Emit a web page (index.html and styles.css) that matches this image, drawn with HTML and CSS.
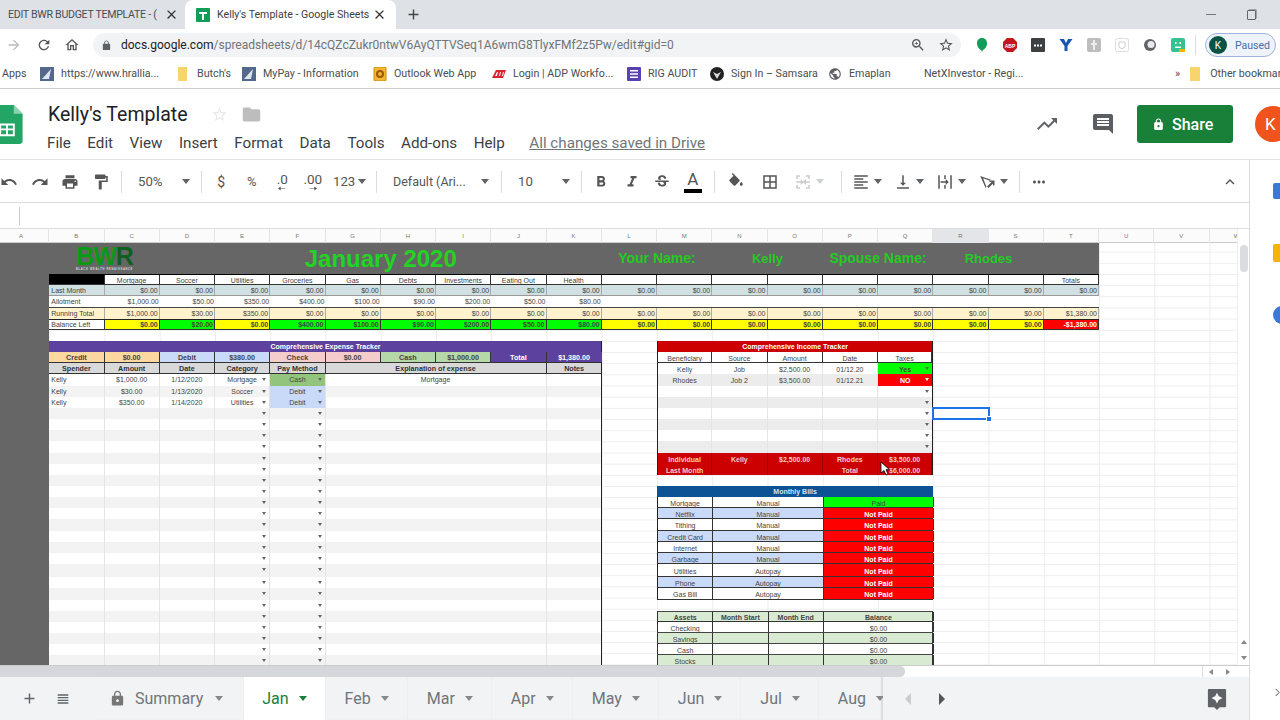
FILE: index.html
```html
<!DOCTYPE html>
<html lang="en">
<head>
<meta charset="UTF-8">
<title>Kelly's Template - Google Sheets</title>
<link rel="stylesheet" href="styles.css">
</head>
<body>

<!-- Browser tabs -->
<div class="tabstrip">
  <div class="btab">
    <span class="btab-text caps">EDIT BWR BUDGET TEMPLATE - (</span>
    <svg class="btab-x" viewBox="0 0 24 24"><path d="M19 6.41L17.59 5 12 10.59 6.41 5 5 6.41 10.59 12 5 17.59 6.41 19 12 13.41 17.59 19 19 17.59 13.41 12z"/></svg>
  </div>
  <div class="btab active">
    <svg class="favicon" viewBox="0 0 14 14"><rect width="14" height="14" rx="1" fill="#0f9d58"/><path d="M3 4h8v2H8v6H6V6H3z" fill="#fff"/></svg>
    <span class="btab-text">Kelly's Template - Google Sheets</span>
    <svg class="btab-x" viewBox="0 0 24 24"><path d="M19 6.41L17.59 5 12 10.59 6.41 5 5 6.41 10.59 12 5 17.59 6.41 19 12 13.41 17.59 19 19 17.59 13.41 12z"/></svg>
  </div>
  <svg class="newtab" viewBox="0 0 24 24"><path d="M19 13h-6v6h-2v-6H5v-2h6V5h2v6h6v2z"/></svg>
  <div class="winctl">
    <span class="win-min"></span>
    <span class="win-restore"></span>
  </div>
</div>

<!-- Address bar -->
<div class="navbar">
  <svg class="nav-ic dim" viewBox="0 0 24 24"><path d="M12 4l-1.41 1.41L16.17 11H4v2h12.17l-5.58 5.59L12 20l8-8z"/></svg>
  <svg class="nav-ic" viewBox="0 0 24 24"><path d="M17.65 6.35C16.2 4.9 14.21 4 12 4c-4.42 0-7.99 3.58-7.99 8s3.57 8 7.99 8c3.73 0 6.84-2.55 7.73-6h-2.08c-.82 2.33-3.04 4-5.65 4-3.31 0-6-2.69-6-6s2.69-6 6-6c1.66 0 3.14.69 4.22 1.78L13 11h7V4l-2.35 2.35z"/></svg>
  <svg class="nav-ic" viewBox="0 0 24 24"><path d="M12 5.69l5 4.5V18h-2v-6H9v6H7v-7.81l5-4.5M12 3L2 12h3v8h6v-6h2v6h6v-8h3L12 3z"/></svg>
  <div class="omnibox">
    <svg class="url-lock" viewBox="0 0 24 24"><path d="M18 8h-1V6c0-2.76-2.24-5-5-5S7 3.24 7 6v2H6c-1.1 0-2 .9-2 2v10c0 1.1.9 2 2 2h12c1.1 0 2-.9 2-2V10c0-1.1-.9-2-2-2zM8.9 6c0-1.71 1.39-3.1 3.1-3.1s3.1 1.39 3.1 3.1v2H8.9V6z"/></svg>
    <span class="url"><b>docs.google.com</b>/spreadsheets/d/14cQZcZukr0ntwV6AyQTTVSeq1A6wmG8TlyxFMf2z5Pw/edit#gid=0</span>
    <svg class="omni-ic" viewBox="0 0 24 24"><path d="M15.5 14h-.79l-.28-.27A6.47 6.47 0 0 0 16 9.5 6.5 6.5 0 1 0 9.5 16c1.61 0 3.09-.59 4.23-1.57l.27.28v.79l5 4.99L20.49 19l-4.99-5zm-6 0C7.01 14 5 11.99 5 9.5S7.01 5 9.5 5 14 7.01 14 9.5 11.99 14 9.5 14zM10 7H9v2H7v1h2v2h1v-2h2V9h-2z"/></svg>
    <svg class="omni-ic" viewBox="0 0 24 24"><path d="M22 9.24l-7.19-.62L12 2 9.19 8.63 2 9.24l5.46 4.73L5.82 21 12 17.27 18.18 21l-1.63-7.03L22 9.24zM12 15.4l-3.76 2.27 1-4.28-3.32-2.88 4.38-.38L12 6.1l1.71 4.04 4.38.38-3.32 2.88 1 4.28L12 15.4z"/></svg>
  </div>
  <div class="exts">
    <svg class="ext" viewBox="0 0 16 16"><path d="M8 1c3.3 0 5 2.4 5 5.4 0 3-2.4 6-4.2 6.6L8 15l-.8-2C5.4 12.4 3 9.4 3 6.4 3 3.4 4.7 1 8 1z" fill="#0f9d58"/></svg>
    <svg class="ext" viewBox="0 0 16 16"><path d="M5 1h6l4 4v6l-4 4H5l-4-4V5z" fill="#c5161d"/><text x="8" y="10.5" class="abp">ABP</text></svg>
    <svg class="ext" viewBox="0 0 16 16"><rect x="1" y="1" width="14" height="14" rx="1" fill="#3c4043"/><path d="M4 7.5h2v2H4zM7 7.5h2v2H7zM10 7.5h2v2h-2z" fill="#fff"/></svg>
    <svg class="ext" viewBox="0 0 16 16"><path d="M1.5 2H6l2 4 2-4h4.5l-5 7v5h-3V9z" fill="#1a56b0"/></svg>
    <svg class="ext" viewBox="0 0 16 16"><rect x="1" y="1" width="14" height="14" rx="2" fill="#bdbdbd"/><path d="M7 3h2v3h2v2H9v5H7V8H5V6h2z" fill="#eee"/></svg>
    <svg class="ext" viewBox="0 0 16 16"><rect x="1.5" y="1.5" width="13" height="13" rx="2" fill="#fff" stroke="#ddd"/><path d="M5 5h6v5l-3 2-3-2z" fill="none" stroke="#ccc"/></svg>
    <svg class="ext" viewBox="0 0 16 16"><circle cx="8" cy="8" r="6" fill="#5f6368"/><circle cx="9" cy="7.5" r="3.5" fill="#e8eaed"/></svg>
    <svg class="ext" viewBox="0 0 16 16"><rect x="1" y="1" width="14" height="14" rx="2" fill="#34c38f"/><path d="M5 5h1.5v2H5zM9.5 5H11v2H9.5zM5 9.5h6V11H5z" fill="#fff"/><rect x="9" y="12" width="6" height="3" fill="#f4b400"/></svg>
  </div>
  <div class="profile">
    <span class="profile-k">K</span>
    <span class="profile-text">Paused</span>
  </div>
</div>

<!-- Bookmarks -->
<div class="bookmarks">
  <span class="bm first">Apps</span>
  <span class="bm w1"><svg class="bm-ic" viewBox="0 0 14 14"><rect width="14" height="14" fill="#54688c"/><path d="M2 12L11 2l-2 10z" fill="#dfe6f0"/></svg>https://www.hrallia...</span>
  <span class="bm w2"><svg class="bm-ic" viewBox="0 0 14 14"><path d="M2 0h9v14H2z" fill="#f7d46d"/></svg>Butch's</span>
  <span class="bm w3"><svg class="bm-ic" viewBox="0 0 14 14"><rect width="14" height="14" fill="#54688c"/><path d="M2 12L11 2l-2 10z" fill="#dfe6f0"/></svg>MyPay - Information</span>
  <span class="bm w4"><svg class="bm-ic" viewBox="0 0 14 14"><rect x="1" width="12" height="14" rx="1" fill="#f2b632" stroke="#d18c00"/><circle cx="7" cy="7" r="3" fill="none" stroke="#9c5700" stroke-width="2"/></svg>Outlook Web App</span>
  <span class="bm w5"><svg class="bm-ic" viewBox="0 0 14 14"><path d="M0 11L4 3h10l-3 8z" fill="#d9232e"/><path d="M3 9l2-4h1l-1 4zM7 9l1-4h1l-1 4zM10 9l1-4h1l-1 4z" fill="#fff"/></svg>Login | ADP Workfo...</span>
  <span class="bm w6"><svg class="bm-ic" viewBox="0 0 14 14"><rect width="14" height="14" rx="1" fill="#5b3fb5"/><path d="M3 3h8v1.5H3zM3 6.2h8v1.5H3zM3 9.5h8V11H3z" fill="#fff"/></svg>RIG AUDIT</span>
  <span class="bm w7"><svg class="bm-ic" viewBox="0 0 14 14"><circle cx="7" cy="7" r="7" fill="#222"/><path d="M3 5l4 7 4-7-4 2z" fill="#ddd"/></svg>Sign In – Samsara</span>
  <span class="bm w8"><svg class="bm-ic" viewBox="0 0 24 24"><path fill="#5f6368" d="M12 2C6.48 2 2 6.48 2 12s4.48 10 10 10 10-4.48 10-10S17.52 2 12 2zm-1 17.93c-3.95-.49-7-3.85-7-7.93 0-.62.08-1.21.21-1.79L9 15v1c0 1.1.9 2 2 2v1.93zm6.9-2.54c-.26-.81-1-1.39-1.9-1.39h-1v-3c0-.55-.45-1-1-1H8v-2h2c.55 0 1-.45 1-1V7h2c1.1 0 2-.9 2-2v-.41c2.93 1.19 5 4.06 5 7.41 0 2.08-.8 3.97-2.1 5.39z"/></svg>Emaplan</span>
  <span class="bm w9">NetXInvestor - Regi...</span>
  <span class="bm-more">»</span>
  <span class="bm-sep"></span>
  <span class="bm"><svg class="bm-ic" viewBox="0 0 14 14"><path d="M1 0h10v14H1z" fill="#f7d46d"/></svg>Other bookmarks</span>
</div>

<!-- Sheets title bar -->
<div class="docbar">
  <svg class="sheets-logo" viewBox="0 0 32 40"><path d="M3 0h20l9 9v28c0 1.7-1.3 3-3 3H3c-1.7 0-3-1.3-3-3V3c0-1.7 1.3-3 3-3z" fill="#23a566"/><path d="M23 0l9 9h-9z" fill="#8ed1b1"/><path d="M8 19h16v13H8zm2 2v3h5v-3zm7 0v3h5v-3zm-7 5v4h5v-4zm7 0v4h5v-4z" fill="#fff" fill-rule="evenodd"/></svg>
  <div class="docinfo">
    <div class="title-row">
      <span class="doc-title">Kelly's Template</span>
      <svg class="star" viewBox="0 0 24 24"><path d="M22 9.24l-7.19-.62L12 2 9.19 8.63 2 9.24l5.46 4.73L5.82 21 12 17.27 18.18 21l-1.63-7.03L22 9.24zM12 15.4l-3.76 2.27 1-4.28-3.32-2.88 4.38-.38L12 6.1l1.71 4.04 4.38.38-3.32 2.88 1 4.28L12 15.4z"/></svg>
      <svg class="folder" viewBox="0 0 24 24"><path d="M10 4H4c-1.1 0-1.99.9-1.99 2L2 18c0 1.1.9 2 2 2h16c1.1 0 2-.9 2-2V8c0-1.1-.9-2-2-2h-8l-2-2z"/></svg>
    </div>
    <div class="menu">
      <span>File</span><span>Edit</span><span>View</span><span>Insert</span><span>Format</span><span>Data</span><span>Tools</span><span>Add-ons</span><span>Help</span>
      <a class="saved">All changes saved in Drive</a>
    </div>
  </div>
  <svg class="doc-ic trend" viewBox="0 0 24 24"><path d="M16 6l2.29 2.29-4.88 4.88-4-4L2 16.59 3.41 18l6-6 4 4 6.3-6.29L22 12V6z"/></svg>
  <svg class="doc-ic comment" viewBox="0 0 24 24"><path d="M21.99 4c0-1.1-.89-2-1.99-2H4c-1.1 0-2 .9-2 2v12c0 1.1.9 2 2 2h14l4 4-.01-18zM18 14H6v-2h12v2zm0-3H6V9h12v2zm0-3H6V6h12v2z"/></svg>
  <div class="share">
    <svg class="share-lock" viewBox="0 0 24 24"><path d="M18 8h-1V6c0-2.76-2.24-5-5-5S7 3.24 7 6v2H6c-1.1 0-2 .9-2 2v10c0 1.1.9 2 2 2h12c1.1 0 2-.9 2-2V10c0-1.1-.9-2-2-2zm-6 9c-1.1 0-2-.9-2-2s.9-2 2-2 2 .9 2 2-.9 2-2 2zm3.1-9H8.9V6c0-1.71 1.39-3.1 3.1-3.1 1.71 0 3.1 1.39 3.1 3.1v2z"/></svg>
    Share
  </div>
  <span class="avatar">K</span>
</div>

<div class="workspace">
  <div class="main">

    <!-- Formatting toolbar -->
    <div class="toolbar">
      <span class="btn"><svg viewBox="0 0 24 24"><path d="M12.5 8c-2.65 0-5.05.99-6.9 2.6L2 7v9h9l-3.62-3.62c1.39-1.16 3.16-1.88 5.12-1.88 3.54 0 6.55 2.31 7.6 5.5l2.37-.78C21.08 11.03 17.15 8 12.5 8z"/></svg></span>
      <span class="btn"><svg viewBox="0 0 24 24"><path d="M18.4 10.6C16.55 8.99 14.15 8 11.5 8c-4.65 0-8.58 3.03-9.96 7.22L3.9 16c1.05-3.19 4.05-5.5 7.6-5.5 1.95 0 3.73.72 5.12 1.88L13 16h9V7l-3.6 3.6z"/></svg></span>
      <span class="btn"><svg viewBox="0 0 24 24"><path d="M19 8H5c-1.66 0-3 1.34-3 3v6h4v4h12v-4h4v-6c0-1.66-1.34-3-3-3zm-3 11H8v-5h8v5zm3-7c-.55 0-1-.45-1-1s.45-1 1-1 1 .45 1 1-.45 1-1 1zm-1-9H6v4h12V3z"/></svg></span>
      <span class="btn"><svg viewBox="0 0 24 24"><path d="M18 4V3c0-.55-.45-1-1-1H5c-.55 0-1 .45-1 1v4c0 .55.45 1 1 1h12c.55 0 1-.45 1-1V6h1v4H9v11c0 .55.45 1 1 1h2c.55 0 1-.45 1-1v-9h8V4h-3z"/></svg></span>
      <span class="sep"></span>
      <span class="pick zoompick"><span>50%</span><i class="caret"></i></span>
      <span class="sep"></span>
      <span class="btn txt">$</span>
      <span class="btn txt small">%</span>
      <span class="btn txt dec">.0<svg viewBox="0 0 12 6"><path d="M11 2.5H4V0L0 3l4 3V3.5h7z"/></svg></span>
      <span class="btn txt dec">.00<svg viewBox="0 0 12 6"><path d="M1 2.5h7V0l4 3-4 3V3.5H1z"/></svg></span>
      <span class="pick numpick"><span>123</span><i class="caret"></i></span>
      <span class="sep"></span>
      <span class="pick fontpick"><span>Default (Ari...</span><i class="caret"></i></span>
      <span class="sep"></span>
      <span class="pick sizepick"><span>10</span><i class="caret"></i></span>
      <span class="sep"></span>
      <span class="btn"><svg viewBox="0 0 24 24"><path d="M15.6 10.79c.97-.67 1.65-1.77 1.65-2.79 0-2.26-1.75-4-4-4H7v14h7.04c2.09 0 3.71-1.7 3.71-3.79 0-1.52-.86-2.82-2.15-3.42zM10 6.5h3c.83 0 1.5.67 1.5 1.5s-.67 1.5-1.5 1.5h-3v-3zm3.5 9H10v-3h3.5c.83 0 1.5.67 1.5 1.5s-.67 1.5-1.5 1.5z"/></svg></span>
      <span class="btn"><svg viewBox="0 0 24 24"><path d="M10 4v3h2.21l-3.42 8H6v3h8v-3h-2.21l3.42-8H18V4z"/></svg></span>
      <span class="btn"><svg viewBox="0 0 24 24"><path d="M7.24 8.75c-.26-.48-.39-1.03-.39-1.67 0-.61.13-1.16.4-1.67.26-.5.63-.93 1.11-1.29.48-.35 1.05-.63 1.7-.83.66-.19 1.39-.29 2.18-.29.81 0 1.54.11 2.21.34.66.22 1.23.54 1.69.94.47.4.83.88 1.08 1.43.25.55.38 1.15.38 1.81h-3.01c0-.31-.05-.59-.15-.85-.09-.27-.24-.49-.44-.68-.2-.19-.45-.33-.75-.44-.3-.1-.66-.16-1.06-.16-.39 0-.74.04-1.03.13-.29.09-.53.21-.72.36-.19.16-.34.34-.44.55-.1.21-.15.43-.15.66 0 .48.25.88.74 1.21.38.25.77.48 1.41.7H7.39c-.05-.08-.11-.17-.15-.25zM21 12v-2H3v2h9.62c.18.07.4.14.55.2.37.17.66.34.87.51.21.17.35.36.43.57.07.2.11.43.11.69 0 .23-.05.45-.14.66-.09.2-.23.38-.42.53-.19.15-.42.26-.71.35-.29.08-.63.13-1.01.13-.43 0-.83-.04-1.18-.13s-.66-.23-.91-.42c-.25-.19-.45-.44-.59-.75-.14-.31-.25-.76-.25-1.21H6.4c0 .55.08 1.13.24 1.58.16.45.37.85.65 1.21.28.35.6.66.98.92.37.26.78.48 1.22.65.44.17.9.3 1.38.39.48.08.96.13 1.44.13.8 0 1.53-.09 2.18-.28s1.21-.45 1.67-.79c.46-.34.82-.77 1.07-1.27s.38-1.07.38-1.71c0-.6-.1-1.14-.31-1.61-.05-.11-.11-.23-.17-.33H21z"/></svg></span>
      <span class="btn textcolor">A<i></i></span>
      <span class="sep wide"></span>
      <span class="btn"><svg viewBox="0 0 24 24"><path d="M16.56 8.94L7.62 0 6.21 1.41l2.38 2.38-5.15 5.15c-.59.59-.59 1.54 0 2.12l5.5 5.5c.29.29.68.44 1.06.44s.77-.15 1.06-.44l5.5-5.5c.59-.58.59-1.53 0-2.12zM19 11.5s-2 2.17-2 3.5c0 1.1.9 2 2 2s2-.9 2-2c0-1.33-2-3.5-2-3.5z"/></svg></span>
      <span class="btn gapped"><svg viewBox="0 0 24 24"><path d="M3 3v18h18V3H3zm8 16H5v-6h6v6zm0-8H5V5h6v6zm8 8h-6v-6h6v6zm0-8h-6V5h6v6z"/></svg></span>
      <span class="btn merge gapped"><svg class="faded" viewBox="0 0 24 24"><path d="M3 3h5v2H5v3H3zM16 3h5v5h-2V5h-3zM3 16h2v3h3v2H3zM19 16h2v5h-5v-2h3zM3 11h6V8l4 4-4 4v-3H3zM21 11h-5V8l-4 4 4 4v-3h5z"/></svg><i class="caret faded"></i></span>
      <span class="sep"></span>
      <span class="btn wide"><svg viewBox="0 0 24 24"><path d="M15 15H3v2h12v-2zm0-8H3v2h12V7zM3 13h18v-2H3v2zm0 8h18v-2H3v2zM3 3v2h18V3H3z"/></svg><i class="caret"></i></span>
      <span class="btn wide"><svg viewBox="0 0 24 24"><path d="M16 13h-3V3h-2v10H8l4 4 4-4zM4 19v2h16v-2H4z"/></svg><i class="caret"></i></span>
      <span class="btn wide"><svg viewBox="0 0 24 24"><path d="M3 3h2v18H3zM19 3h2v18h-2zM11 3h2v5h-2zM11 16h2v5h-2zM6 11h7V8l4 4-4 4v-3H6z"/></svg><i class="caret"></i></span>
      <span class="btn wide"><svg viewBox="0 0 24 24"><path d="M3 4l17 6-2.2 1-11-4 4.5 11.5-1.1 1.5zM14 20l6-6v3l2-1v-6h-6l-1 2h3l-6 6z"/></svg><i class="caret"></i></span>
      <span class="sep"></span>
      <span class="btn"><svg viewBox="0 0 24 24"><path d="M6 10c-1.1 0-2 .9-2 2s.9 2 2 2 2-.9 2-2-.9-2-2-2zm12 0c-1.1 0-2 .9-2 2s.9 2 2 2 2-.9 2-2-.9-2-2-2zm-6 0c-1.1 0-2 .9-2 2s.9 2 2 2 2-.9 2-2-.9-2-2-2z"/></svg></span>
      <span class="btn collapse"><svg viewBox="0 0 24 24"><path d="M12 8l-6 6 1.41 1.41L12 10.83l4.59 4.58L18 14z"/></svg></span>
    </div>

    <!-- Formula bar -->
    <div class="formula"><span class="fx-sep"></span></div>

    <div class="sheetarea">
      <div class="sheetcol">
        <div class="colhdr">
          <span>A</span><span>B</span><span>C</span><span>D</span><span>E</span><span>F</span><span>G</span><span>H</span><span>I</span><span>J</span><span>K</span><span>L</span><span>M</span><span>N</span><span>O</span><span>P</span><span>Q</span><span class="cur">R</span><span>S</span><span>T</span><span>U</span><span>V</span><span>W</span>
        </div>
        <div class="sheet">
          <div class="col-a"></div>

          <!-- Budget summary -->
          <div class="sec budget">
            <div class="row band">
              <div class="s2 logo"><span class="logo-mark">BW<em>R</em></span><span class="logo-sub">BLACK WEALTH RENAISSANCE</span></div>
              <div class="s8 month">January 2020</div>
              <div class="s2 who">Your Name:</div>
              <div class="s2 who nm">Kelly</div>
              <div class="s2 who">Spouse Name:</div>
              <div class="s2 who nm">Rhodes</div>
              <div></div>
            </div>
            <div class="row dk top">
              <div class="black"></div><div>Mortgage</div><div>Soccer</div><div>Utilities</div><div>Groceries</div><div>Gas</div><div>Debts</div><div>Investments</div><div>Eating Out</div><div>Health</div><div></div><div></div><div></div><div></div><div></div><div></div><div></div><div></div><div>Totals</div>
            </div>
            <div class="row gr lastm nums">
              <div class="l">Last Month</div><div>$0.00</div><div>$0.00</div><div>$0.00</div><div>$0.00</div><div>$0.00</div><div>$0.00</div><div>$0.00</div><div>$0.00</div><div>$0.00</div><div>$0.00</div><div>$0.00</div><div>$0.00</div><div>$0.00</div><div>$0.00</div><div>$0.00</div><div>$0.00</div><div>$0.00</div><div>$0.00</div>
            </div>
            <div class="row nums allot">
              <div class="l">Allotment</div><div>$1,000.00</div><div>$50.00</div><div>$350.00</div><div>$400.00</div><div>$100.00</div><div>$90.00</div><div>$200.00</div><div>$50.00</div><div>$80.00</div><div></div><div></div><div></div><div></div><div></div><div></div><div></div><div></div><div></div>
            </div>
            <div class="row gr running nums">
              <div class="l">Running Total</div><div>$1,000.00</div><div>$30.00</div><div>$350.00</div><div>$0.00</div><div>$0.00</div><div>$0.00</div><div>$0.00</div><div>$0.00</div><div>$0.00</div><div>$0.00</div><div>$0.00</div><div>$0.00</div><div>$0.00</div><div>$0.00</div><div>$0.00</div><div>$0.00</div><div>$0.00</div><div>$1,380.00</div>
            </div>
            <div class="row dk balance nums">
              <div class="l plain">Balance Left</div><div class="yel">$0.00</div><div class="grn">$20.00</div><div class="yel">$0.00</div><div class="grn">$400.00</div><div class="grn">$100.00</div><div class="grn">$90.00</div><div class="grn">$200.00</div><div class="grn">$50.00</div><div class="grn">$80.00</div><div class="yel">$0.00</div><div class="yel">$0.00</div><div class="yel">$0.00</div><div class="yel">$0.00</div><div class="yel">$0.00</div><div class="yel">$0.00</div><div class="yel">$0.00</div><div class="yel">$0.00</div><div class="neg">-$1,380.00</div>
            </div>
          </div>

          <!-- Expense tracker -->
          <div class="sec expense">
            <div class="row head purple"><div class="s10">Comprehensive Expense Tracker</div></div>
            <div class="row dk sum">
              <div class="or">Credit</div><div class="or">$0.00</div><div class="bl">Debit</div><div class="bl">$380.00</div><div class="pk">Check</div><div class="pk">$0.00</div><div class="gn">Cash</div><div class="gn">$1,000.00</div><div class="pu">Total</div><div class="pu">$1,380.00</div>
            </div>
            <div class="row dk hdr">
              <div>Spender</div><div>Amount</div><div>Date</div><div>Category</div><div>Pay Method</div><div class="s4">Explanation of expense</div><div>Notes</div>
            </div>
            <div class="row entry"><div class="l">Kelly</div><div>$1,000.00</div><div>1/12/2020</div><div class="dd">Mortgage</div><div class="dd cash">Cash</div><div class="s4">Mortgage</div><div></div></div>
            <div class="row entry"><div class="l">Kelly</div><div>$30.00</div><div>1/13/2020</div><div class="dd">Soccer</div><div class="dd debit">Debit</div><div class="s4"></div><div></div></div>
            <div class="row entry"><div class="l">Kelly</div><div>$350.00</div><div>1/14/2020</div><div class="dd">Utilities</div><div class="dd debit">Debit</div><div class="s4"></div><div></div></div>
            <div class="row entry"><div></div><div></div><div></div><div class="dd"></div><div class="dd"></div><div class="s4"></div><div></div></div>
            <div class="row entry"><div></div><div></div><div></div><div class="dd"></div><div class="dd"></div><div class="s4"></div><div></div></div>
            <div class="row entry"><div></div><div></div><div></div><div class="dd"></div><div class="dd"></div><div class="s4"></div><div></div></div>
            <div class="row entry"><div></div><div></div><div></div><div class="dd"></div><div class="dd"></div><div class="s4"></div><div></div></div>
            <div class="row entry"><div></div><div></div><div></div><div class="dd"></div><div class="dd"></div><div class="s4"></div><div></div></div>
            <div class="row entry"><div></div><div></div><div></div><div class="dd"></div><div class="dd"></div><div class="s4"></div><div></div></div>
            <div class="row entry"><div></div><div></div><div></div><div class="dd"></div><div class="dd"></div><div class="s4"></div><div></div></div>
            <div class="row entry"><div></div><div></div><div></div><div class="dd"></div><div class="dd"></div><div class="s4"></div><div></div></div>
            <div class="row entry"><div></div><div></div><div></div><div class="dd"></div><div class="dd"></div><div class="s4"></div><div></div></div>
            <div class="row entry"><div></div><div></div><div></div><div class="dd"></div><div class="dd"></div><div class="s4"></div><div></div></div>
            <div class="row entry"><div></div><div></div><div></div><div class="dd"></div><div class="dd"></div><div class="s4"></div><div></div></div>
            <div class="row entry"><div></div><div></div><div></div><div class="dd"></div><div class="dd"></div><div class="s4"></div><div></div></div>
            <div class="row entry"><div></div><div></div><div></div><div class="dd"></div><div class="dd"></div><div class="s4"></div><div></div></div>
            <div class="row entry"><div></div><div></div><div></div><div class="dd"></div><div class="dd"></div><div class="s4"></div><div></div></div>
            <div class="row entry"><div></div><div></div><div></div><div class="dd"></div><div class="dd"></div><div class="s4"></div><div></div></div>
            <div class="row entry"><div></div><div></div><div></div><div class="dd"></div><div class="dd"></div><div class="s4"></div><div></div></div>
            <div class="row entry"><div></div><div></div><div></div><div class="dd"></div><div class="dd"></div><div class="s4"></div><div></div></div>
            <div class="row entry"><div></div><div></div><div></div><div class="dd"></div><div class="dd"></div><div class="s4"></div><div></div></div>
            <div class="row entry"><div></div><div></div><div></div><div class="dd"></div><div class="dd"></div><div class="s4"></div><div></div></div>
            <div class="row entry"><div></div><div></div><div></div><div class="dd"></div><div class="dd"></div><div class="s4"></div><div></div></div>
            <div class="row entry"><div></div><div></div><div></div><div class="dd"></div><div class="dd"></div><div class="s4"></div><div></div></div>
            <div class="row entry"><div></div><div></div><div></div><div class="dd"></div><div class="dd"></div><div class="s4"></div><div></div></div>
            <div class="row entry"><div></div><div></div><div></div><div class="dd"></div><div class="dd"></div><div class="s4"></div><div></div></div>
          </div>

          <!-- Income tracker -->
          <div class="sec income">
            <div class="row head red"><div class="s5">Comprehensive Income Tracker</div></div>
            <div class="row dk"><div>Beneficiary</div><div>Source</div><div>Amount</div><div>Date</div><div>Taxes</div></div>
            <div class="row inc"><div>Kelly</div><div>Job</div><div>$2,500.00</div><div>01/12.20</div><div class="dd grn bold">Yes</div></div>
            <div class="row inc"><div>Rhodes</div><div>Job 2</div><div>$3,500.00</div><div>01/12.21</div><div class="dd neg bold">NO</div></div>
            <div class="row inc"><div></div><div></div><div></div><div></div><div class="dd"></div></div>
            <div class="row inc"><div></div><div></div><div></div><div></div><div class="dd"></div></div>
            <div class="row inc"><div></div><div></div><div></div><div></div><div class="dd"></div></div>
            <div class="row inc"><div></div><div></div><div></div><div></div><div class="dd"></div></div>
            <div class="row inc"><div></div><div></div><div></div><div></div><div class="dd"></div></div>
            <div class="row inc"><div></div><div></div><div></div><div></div><div class="dd"></div></div>
            <div class="row foot"><div>Individual</div><div>Kelly</div><div>$2,500.00</div><div>Rhodes</div><div>$3,500.00</div></div>
            <div class="row foot"><div>Last Month</div><div></div><div></div><div>Total</div><div>$6,000.00</div></div>
          </div>

          <!-- Monthly bills -->
          <div class="sec bills">
            <div class="row head navy"><div class="s5">Monthly Bills</div></div>
            <div class="row bill"><div>Mortgage</div><div class="s2">Manual</div><div class="s2 paid">Paid</div></div>
            <div class="row bill"><div>Netflix</div><div class="s2">Manual</div><div class="s2 unpaid">Not Paid</div></div>
            <div class="row bill"><div>Tithing</div><div class="s2">Manual</div><div class="s2 unpaid">Not Paid</div></div>
            <div class="row bill"><div>Credit Card</div><div class="s2">Manual</div><div class="s2 unpaid">Not Paid</div></div>
            <div class="row bill"><div>Internet</div><div class="s2">Manual</div><div class="s2 unpaid">Not Paid</div></div>
            <div class="row bill"><div>Garbage</div><div class="s2">Manual</div><div class="s2 unpaid">Not Paid</div></div>
            <div class="row bill tall"><div>Utilities</div><div class="s2">Autopay</div><div class="s2 unpaid">Not Paid</div></div>
            <div class="row bill"><div>Phone</div><div class="s2">Autopay</div><div class="s2 unpaid">Not Paid</div></div>
            <div class="row bill"><div>Gas Bill</div><div class="s2">Autopay</div><div class="s2 unpaid">Not Paid</div></div>
          </div>

          <!-- Assets -->
          <div class="sec assets">
            <div class="row dk asset-head"><div>Assets</div><div>Month Start</div><div>Month End</div><div class="s2">Balance</div></div>
            <div class="row asset"><div>Checking</div><div></div><div></div><div class="s2">$0.00</div></div>
            <div class="row asset"><div>Savings</div><div></div><div></div><div class="s2">$0.00</div></div>
            <div class="row asset"><div>Cash</div><div></div><div></div><div class="s2">$0.00</div></div>
            <div class="row asset"><div>Stocks</div><div></div><div></div><div class="s2">$0.00</div></div>
          </div>

          <div class="selected"><i></i></div>
          <svg class="cursor" viewBox="0 0 10 15"><path d="M1 1v11l3-2.5 2 4.5 2-1-2-4.3h3.5z" fill="#fff" stroke="#000" stroke-width=".8"/></svg>
        </div>
      </div>
      <div class="vscroll">
        <span class="vthumb"></span>
        <i class="vup"></i>
        <i class="vdown"></i>
      </div>
    </div>

    <div class="hscroll">
      <span class="hthumb"></span>
      <div class="harrows"><i class="hleft"></i><i class="hright"></i></div>
    </div>

    <!-- Sheet tabs -->
    <div class="sheetbar">
      <svg class="bar-ic plus" viewBox="0 0 24 24"><path d="M19 13h-6v6h-2v-6H5v-2h6V5h2v6h6v2z"/></svg>
      <svg class="bar-ic" viewBox="0 0 24 24"><path d="M4 5h16v2H4zM4 9h16v2H4zM4 13h16v2H4zM4 17h16v2H4z"/></svg>
      <div class="tabs">
        <span class="tab summary"><svg viewBox="0 0 24 24"><path d="M18 8h-1V6c0-2.76-2.24-5-5-5S7 3.24 7 6v2H6c-1.1 0-2 .9-2 2v10c0 1.1.9 2 2 2h12c1.1 0 2-.9 2-2V10c0-1.1-.9-2-2-2zm-6 9c-1.1 0-2-.9-2-2s.9-2 2-2 2 .9 2 2-.9 2-2 2zm3.1-9H8.9V6c0-1.71 1.39-3.1 3.1-3.1 1.71 0 3.1 1.39 3.1 3.1v2z"/></svg>Summary<i class="caret"></i></span>
        <span class="tab on">Jan<i class="caret"></i></span>
        <span class="tab">Feb<i class="caret"></i></span>
        <span class="tab">Mar<i class="caret"></i></span>
        <span class="tab">Apr<i class="caret"></i></span>
        <span class="tab">May<i class="caret"></i></span>
        <span class="tab">Jun<i class="caret"></i></span>
        <span class="tab">Jul<i class="caret"></i></span>
        <span class="tab">Aug<i class="caret"></i></span>
      </div>
      <div class="tabnav">
        <i class="nav-left"></i>
        <i class="nav-right"></i>
      </div>
      <svg class="explore" viewBox="0 0 22 24"><path d="M2 1h18c.6 0 1 .4 1 1v18c0 .6-.4 1-1 1h-6l-3 3-3-3H2c-.6 0-1-.4-1-1V2c0-.6.4-1 1-1z" fill="#5f6368"/><path d="M11 5l2 4 4 2-4 2-2 4-2-4-4-2 4-2z" fill="#fff"/></svg>
    </div>
  </div>

  <!-- Side panel, mostly cut off by the window edge -->
  <div class="side">
    <span class="side-cal"></span>
    <span class="side-keep"></span>
    <span class="side-task"></span>
    <svg class="side-chev" viewBox="0 0 10 14"><path d="M1 1l6 6-6 6" fill="none" stroke="#444" stroke-width="1.5"/></svg>
  </div>
</div>

</body>
</html>
```

FILE: styles.css
```css
:root {
  --cw: 55.25px;
  --rh: 11.17px;
}

* {
  box-sizing: border-box;
}

html, body {
  margin: 0;
  width: 1280px;
  height: 720px;
  overflow: hidden;
  background: #fff;
  font-family: Roboto, "Liberation Sans", sans-serif;
}

svg {
  display: block;
  flex: none;
  fill: currentColor;
}

/* Browser tab strip */
.tabstrip {
  height: 29px;
  background: #dee1e6;
  display: flex;
  align-items: flex-end;
  overflow: hidden;
}

.btab {
  display: flex;
  align-items: center;
  height: 29px;
  font-size: 10.6px;
  color: #4a4d51;
  width: 185px;
  padding: 0 6px 0 8px;
}

.btab-text {
  flex: 1;
  white-space: nowrap;
  overflow: hidden;
}

.caps {
  letter-spacing: -.28px;
}

.btab-x {
  width: 15px;
  height: 15px;
  color: #333;
}

.btab.active {
  width: 211px;
  background: #fff;
  border-radius: 8px 8px 0 0;
  padding: 0 9px 0 11px;
  color: #3c4043;
}

.favicon {
  width: 14px;
  height: 14px;
  margin-right: 7px;
}

.newtab {
  width: 17px;
  height: 17px;
  margin: 0 0 6px 9px;
  color: #444;
}

.winctl {
  margin-left: auto;
  display: flex;
  align-items: center;
  align-self: center;
  gap: 31px;
  padding-right: 24px;
}

.win-min {
  width: 10px;
  height: 1px;
  background: #777;
}

.win-restore {
  width: 9px;
  height: 10px;
  border: 1px solid #666;
  border-radius: 1px;
  box-shadow: 1px -1px 0 -0.5px #666;
}

/* Address bar */
.navbar {
  height: 30px;
  display: flex;
  align-items: center;
  padding: 2px 0 0 6px;
  color: #5f6368;
}

.nav-ic {
  width: 16px;
  height: 16px;
  margin-right: 12px;
  color: #555;
}

.nav-ic.dim {
  color: #bbb;
  margin-right: 14px;
}

.omnibox {
  width: 868px;
  height: 24px;
  margin-left: 1px;
  background: #f1f3f4;
  border-radius: 12px;
  display: flex;
  align-items: center;
  padding: 0 7px 0 8px;
  flex: none;
}

.url-lock {
  width: 11px;
  height: 11px;
  color: #5f6368;
  margin-right: 9px;
}

.url {
  font-size: 12px;
  color: #70757a;
  flex: 1;
  white-space: nowrap;
}

.url b {
  font-weight: 400;
  color: #202124;
}

.omni-ic {
  width: 16px;
  height: 16px;
  color: #555;
  margin-left: 12px;
}

.exts {
  display: flex;
  gap: 12px;
  width: 222px;
  margin-left: 13px;
  border-right: 1px solid #ddd;
  height: 20px;
  align-items: center;
  flex: none;
}

.ext {
  width: 16px;
  height: 16px;
}

.abp {
  font: bold 5px "Liberation Sans", sans-serif;
  fill: #fff;
  text-anchor: middle;
}

.profile {
  margin-left: 9px;
  width: 71px;
  height: 24px;
  flex: none;
  border: 1px solid #9fb4d8;
  border-radius: 12px;
  background: #eef2f9;
  display: flex;
  align-items: center;
  gap: 8px;
  padding-left: 3px;
  font-size: 10.5px;
  color: #4a6fa5;
}

.profile-k {
  width: 18px;
  height: 18px;
  border-radius: 50%;
  background: #0b5345;
  color: #fff;
  display: flex;
  align-items: center;
  justify-content: center;
  font-size: 10px;
}

/* Bookmarks bar */
.bookmarks {
  height: 30px;
  display: flex;
  align-items: center;
  border-bottom: 1px solid #ccc;
  font-size: 10.7px;
  color: #4a4d51;
  white-space: nowrap;
  overflow: hidden;
  padding-left: 2px;
}

.bm {
  display: flex;
  align-items: center;
  gap: 7px;
  flex: none;
}

.bm-ic {
  width: 14px;
  height: 14px;
}

.first { width: 38px; }
.w1 { width: 136px; }
.w2 { width: 66px; }
.w3 { width: 131px; }
.w4 { width: 119px; }
.w5 { width: 135px; }
.w6 { width: 83px; }
.w7 { width: 118px; }
.w8 { width: 96px; }
.w9 { width: 251px; }

.bm-more {
  width: 13px;
  font-size: 11px;
}

.bm-sep {
  width: 1px;
  height: 16px;
  background: #ddd;
  margin-right: 9px;
}

/* Sheets title and menu */
.docbar {
  height: 71px;
  display: flex;
  align-items: center;
  border-bottom: 1px solid #e0e0e0;
  overflow: hidden;
}

.sheets-logo {
  width: 32px;
  height: 39px;
  margin-left: -9px;
  margin-top: 1px;
}

.docinfo {
  width: 964px;
  flex: none;
  margin-left: 25px;
  align-self: flex-start;
  padding-top: 13px;
}

.title-row {
  display: flex;
  align-items: center;
  height: 24px;
}

.doc-title {
  font-size: 19.5px;
  color: #202124;
  width: 163px;
}

.star {
  width: 17px;
  height: 17px;
  color: #e8e8e8;
}

.folder {
  width: 21px;
  height: 21px;
  margin-left: 13px;
  color: #bdbdbd;
}

.menu {
  display: flex;
  gap: 16.5px;
  font-size: 15.2px;
  color: #3c4043;
  margin-top: 6px;
  height: 22px;
  align-items: center;
  margin-left: -1px;
}

.saved {
  margin-left: 8px;
  color: #70757a;
  text-decoration: underline;
}

.doc-ic {
  width: 24px;
  height: 24px;
  flex: none;
  color: #5f6368;
}

.trend {
  margin-left: 23px;
}

.comment {
  margin-left: 32px;
  color: #5a5e62;
}

.share {
  margin-left: 22px;
  width: 96px;
  height: 38px;
  flex: none;
  background: #188038;
  border-radius: 3px;
  color: #fff;
  font-size: 16px;
  font-weight: 500;
  display: flex;
  align-items: center;
  padding-left: 15px;
  gap: 7px;
}

.share-lock {
  width: 13px;
  height: 13px;
}

.avatar {
  margin-left: 22px;
  width: 36px;
  height: 36px;
  flex: none;
  border-radius: 50%;
  background: #f1531c;
  color: #fff;
  font-size: 17px;
  display: flex;
  align-items: center;
  padding-left: 10px;
}

/* Everything under the title bar */
.workspace {
  height: 560px;
  display: flex;
}

.main {
  width: 1250px;
  display: flex;
  flex-direction: column;
  border-right: 1px solid #dadce0;
  flex: none;
}

.toolbar {
  height: 43px;
  flex: none;
  display: flex;
  align-items: center;
  margin-left: -6px;
  padding-top: 1px;
  border-bottom: 1px solid #dadce0;
  color: #555;
}

.btn {
  width: 30.5px;
  height: 24px;
  flex: none;
  display: flex;
  align-items: center;
  justify-content: center;
}

.btn svg {
  width: 18px;
  height: 18px;
}

.btn.txt {
  font-size: 14px;
  color: #555;
}

.btn.small {
  font-size: 13px;
}

.btn.dec {
  flex-direction: column;
  font-size: 13.5px;
  line-height: 13px;
}

.btn.dec svg {
  width: 8px;
  height: 5px;
  align-self: center;
}

.btn.wide {
  width: 42px;
  justify-content: flex-start;
  padding-left: 6px;
  gap: 4px;
}

.btn.merge {
  width: 48px;
  justify-content: flex-start;
  padding-left: 6px;
  gap: 4px;
}

.btn.gapped {
  margin-left: 3px;
}

.faded {
  opacity: .3;
}

.btn.collapse {
  margin-left: auto;
  margin-right: 4px;
}

.textcolor {
  flex-direction: column;
  font-size: 17px;
  line-height: 18px;
  color: #555;
}

.textcolor i {
  width: 18px;
  height: 4px;
  background: #000;
  margin-top: 1px;
}

.sep {
  width: 1px;
  height: 22px;
  background: #dadce0;
  margin: 0 4.5px;
  flex: none;
}

.sep.wide {
  margin: 0 6px;
}

.caret {
  display: inline-block;
  flex: none;
  width: 0;
  height: 0;
  border-left: 4px solid transparent;
  border-right: 4px solid transparent;
  border-top: 5px solid #5f6368;
}

.pick {
  display: flex;
  align-items: center;
  justify-content: space-between;
  font-size: 13.2px;
  color: #555;
  flex: none;
}

.zoompick { width: 70px; padding: 0 6px 0 12px; }
.numpick { width: 43px; padding: 0 5px 0 5px; }
.fontpick { width: 115px; padding: 0 7px 0 12px; font-size: 12.5px; }
.sizepick { width: 70px; padding: 0 6px 0 12px; }

.formula {
  height: 26px;
  flex: none;
  border-bottom: 1px solid #dadce0;
  display: flex;
  align-items: center;
  padding-left: 19px;
}

.fx-sep {
  width: 1px;
  height: 18px;
  background: #ccc;
}

.sheetarea {
  height: 436px;
  flex: none;
  display: flex;
  overflow: hidden;
}

.sheetcol {
  width: 1237px;
  flex: none;
  overflow: hidden;
}

.colhdr {
  height: 14px;
  margin-left: -6px;
  display: grid;
  grid-template-columns: repeat(23, var(--cw));
  background: #fbfbfb;
  border-bottom: 1px solid #ccc;
}

.colhdr span {
  font: 6px/14px "Liberation Sans", sans-serif;
  color: #777;
  text-align: center;
  border-right: 1px solid #e3e3e3;
}

.colhdr .cur {
  background: #e3e5e8;
}

/* Spreadsheet grid */
.sheet {
  position: relative;
  margin-left: -6px;
  display: grid;
  grid-template-columns: repeat(23, var(--cw));
  grid-template-rows: 31px repeat(26, var(--rh)) 13.17px repeat(9, var(--rh));
  background-image:
    linear-gradient(to right, #ededed 1px, transparent 1px),
    linear-gradient(to bottom, #ededed 1px, transparent 1px);
  background-size: var(--cw) var(--rh);
  background-position: 0 0, 0 31px;
  font: 7px/12px "Liberation Sans", sans-serif;
  color: #444;
}

.col-a {
  grid-column: 1;
  grid-row: 1 / -1;
  background: #666;
}

.sec {
  background: #fff;
}

.budget {
  --n: 19;
  grid-column: 2 / 21;
  grid-row: 1 / 7;
}

.expense {
  --n: 10;
  grid-column: 2 / 12;
  grid-row: 8 / 38;
  border-right: 1px solid #222;
}

.income {
  --n: 5;
  grid-column: 13 / 18;
  grid-row: 8 / span 12;
  line-height: 13px;
}

.bills {
  --n: 5;
  grid-column: 13 / 18;
  grid-row: 21 / span 10;
  line-height: 13px;
}

.assets {
  --n: 5;
  grid-column: 13 / 18;
  grid-row: 32 / span 5;
  line-height: 13px;
}

.row {
  display: grid;
  grid-template-columns: repeat(var(--n), var(--cw));
  height: var(--rh);
  text-align: center;
}

.row > div {
  white-space: nowrap;
  overflow: hidden;
  padding: 0 1px;
  min-width: 0;
}

/* Row 27 of the sheet is a little taller than the others */
.row.tall,
.expense .row:nth-child(21) {
  height: 13.17px;
  line-height: 16px;
}

.s2 { grid-column: span 2; }
.s4 { grid-column: span 4; }
.s5 { grid-column: span 5; }
.s8 { grid-column: span 8; }
.s10 { grid-column: span 10; }

.row .l {
  text-align: left;
  padding-left: 2px;
}

.nums {
  text-align: right;
}

.dk > div {
  border-right: 1px solid #333;
}

.dk {
  border-bottom: 1px solid #333;
}

.gr > div {
  border-right: 1px solid #aaa;
}

/* Top band with month and names */
.band {
  height: 31px;
  background: #666;
  align-items: center;
  text-align: center;
}

.row.band > div {
  overflow: visible;
  padding: 0;
}

.logo {
  display: flex;
  flex-direction: column;
  align-items: center;
  padding-right: 2px;
}

.logo-mark {
  font: bold 25px/23px "Liberation Sans", sans-serif;
  letter-spacing: -1px;
  color: #0a9a12;
}

.logo-mark em {
  font-style: normal;
  color: #0f5f1e;
}

.logo-sub {
  font: bold 2.6px/4px "Liberation Sans", sans-serif;
  letter-spacing: .7px;
  color: #ddd;
}

.month {
  font: bold 24px/31px "Liberation Sans", sans-serif;
  color: #22d322;
}

.who {
  font: bold 14px/31px "Liberation Sans", sans-serif;
  color: #22cc22;
}

.who.nm {
  font-size: 13px;
}

.black {
  background: #000;
}

.top {
  border-top: 1px solid #000;
}

.lastm {
  background: #d0e0e3;
  border-bottom: 1px solid #999;
}

.running {
  background: #fff2cc;
  border-top: 1px solid #444;
}

.balance {
  border-top: 1px solid #222;
  font-weight: bold;
  line-height: 10px;
}

.balance .plain {
  font-weight: normal;
}

.row .yel { background: #ff0; }
.row .grn { background: #0f0; }
.row .neg { background: #f00; color: #fff; }

/* Section titles */
.head {
  font-weight: bold;
  color: #fff;
  line-height: 12px;
}

.purple { background: #5c419e; }
.red { background: #c00; }
.navy { background: #0b5394; color: #cfe2f3; }

.sum {
  font-weight: bold;
  font-size: 7.2px;
}

.or { background: #fcd79f; }
.bl { background: #c9daf8; }
.pk { background: #f4cccc; }
.gn { background: #b6d7a8; }
.pu { background: #5c419e; color: #fff; }

.hdr {
  background: #d9d9d9;
  font-weight: bold;
  font-size: 7.2px;
  color: #333;
}

.entry > div {
  border-right: 1px solid #e4e4e4;
}

.entry:nth-child(odd) {
  background: #f3f3f3;
}

.expense .entry > div:last-child,
.expense .dk > div:last-child {
  border-right: 0;
}

.row .cash { background: #93c47d; }
.row .debit { background: #c9daf8; }

/* Dropdown arrow inside a cell */
.dd {
  position: relative;
}

.dd::after {
  content: "";
  position: absolute;
  top: 4px;
  right: 3px;
  border-left: 2px solid transparent;
  border-right: 2px solid transparent;
  border-top: 3px solid #666;
}

.neg.dd::after {
  border-top-color: #fff;
}

.bold {
  font-weight: bold;
}

.income .row {
  border-left: 1px solid #222;
  border-right: 1px solid #222;
  grid-template-columns: 54.25px repeat(3, var(--cw)) 54.25px;
}

.inc > div {
  border-right: 1px solid #e4e4e4;
}

.inc > div:last-child {
  border-right: 0;
}

.inc:nth-child(even) {
  background: #ececec;
}

.foot {
  background: #c00;
  color: #f4cccc;
  font-weight: bold;
}

.foot > div {
  border-right: 1px solid #900;
}

.bill {
  border-bottom: 1px solid #333;
  border-left: 1px solid #222;
  border-right: 1px solid #222;
}

.bill > div {
  border-right: 1px solid #333;
}

.bill:nth-child(odd) {
  background: #c9daf8;
}

.paid {
  background: #0f0;
}

.unpaid {
  background: #f00;
  color: #fff;
  font-weight: bold;
}

.asset-head {
  background: #d9ead3;
  font-weight: bold;
  line-height: 11px;
  border-top: 1px solid #444;
  border-left: 1px solid #333;
  border-right: 1px solid #333;
}

.asset {
  border-left: 1px solid #333;
  border-right: 1px solid #333;
  border-bottom: 1px solid #444;
}

.asset > div {
  border-right: 1px solid #333;
}

.asset:nth-child(odd) {
  background: #d9ead3;
}

/* Active cell */
.selected {
  grid-column: 18;
  grid-row: 14;
  border: 2px solid #1a73e8;
  margin: -1px;
  position: relative;
  z-index: 2;
}

.selected i {
  position: absolute;
  right: -4px;
  bottom: -4px;
  width: 6px;
  height: 6px;
  background: #1a73e8;
  border: 1px solid #fff;
}

.cursor {
  position: absolute;
  left: 886px;
  top: 218px;
  width: 10px;
  height: 15px;
  z-index: 3;
}

/* Scrollbars */
.vscroll {
  width: 13px;
  flex: none;
  display: flex;
  flex-direction: column;
  align-items: center;
  border-left: 1px solid #eee;
  padding-top: 16px;
}

.vthumb {
  width: 8px;
  height: 27px;
  background: #dadce0;
  border-radius: 4px;
}

.vup,
.vdown {
  width: 0;
  height: 0;
  border-left: 3px solid transparent;
  border-right: 3px solid transparent;
}

.vup {
  margin-top: auto;
  border-bottom: 4px solid #888;
  margin-bottom: 12px;
}

.vdown {
  border-top: 4px solid #888;
  margin-bottom: 5px;
}

.hscroll {
  height: 12px;
  flex: none;
  display: flex;
  align-items: stretch;
  border-top: 1px solid #ccc;
  justify-content: space-between;
}

.hthumb {
  width: 905px;
  background: #d5d7da;
  border-radius: 0 5px 5px 0;
}

.harrows {
  display: flex;
  align-items: center;
  width: 34px;
  margin-right: 13px;
  border-left: 1px solid #ddd;
  justify-content: space-around;
}

.hleft,
.hright {
  width: 0;
  height: 0;
  border-top: 3px solid transparent;
  border-bottom: 3px solid transparent;
}

.hleft { border-right: 4px solid #888; }
.hright { border-left: 4px solid #888; }

/* Sheet tabs */
.sheetbar {
  flex: 1;
  min-height: 0;
  display: flex;
  align-items: center;
  background: #f1f3f4;
}

.bar-ic {
  width: 16px;
  height: 16px;
  margin-left: 17px;
  color: #5f6368;
  flex: none;
}

.bar-ic.plus {
  margin-left: 21px;
  width: 17px;
  height: 17px;
}

.tabs {
  margin-left: 25px;
  width: 787px;
  height: 100%;
  flex: none;
  display: flex;
  overflow: hidden;
  box-shadow: inset -2px 0 1px #dadce0;
}

.tab {
  flex: none;
  display: flex;
  align-items: center;
  gap: 10px;
  padding: 0 18px 0 19px;
  font-size: 16px;
  color: #70757a;
  border-right: 1px solid #eceef0;
}

.tab.summary {
  padding: 0 20px 0 13px;
  gap: 0;
}

.tab.summary svg {
  width: 17px;
  height: 17px;
  margin-right: 9px;
  color: #777;
}

.tab.summary .caret {
  margin-left: 12px;
}

.tab.on {
  background: #fff;
  color: #188038;
  padding-left: 18px;
}

.tab.on .caret {
  border-top-color: #188038;
}

.tab .caret {
  border-top-color: #888;
}

.tabnav {
  display: flex;
  align-items: center;
  gap: 28px;
  margin-left: 22px;
  flex: none;
}

.nav-left,
.nav-right {
  width: 0;
  height: 0;
  border-top: 6px solid transparent;
  border-bottom: 6px solid transparent;
}

.nav-left { border-right: 6px solid #ccc; }
.nav-right { border-left: 6px solid #555; }

.explore {
  width: 20px;
  height: 22px;
  margin-left: 262px;
}

/* Right side panel */
.side {
  flex: 1;
  display: flex;
  flex-direction: column;
  padding: 23px 0 0 23px;
  background: #fff;
}

.side-cal {
  width: 16px;
  height: 16px;
  background: #3c78d8;
  border-radius: 2px;
  flex: none;
}

.side-keep {
  width: 16px;
  height: 18px;
  background: #f4b400;
  border-radius: 2px;
  margin-top: 45px;
  flex: none;
}

.side-task {
  width: 18px;
  height: 18px;
  border-radius: 50%;
  background: #3c78d8;
  margin-top: 44px;
  flex: none;
}

.side-chev {
  width: 6px;
  height: 9px;
  margin: 364px 0 0 2px;
}
```
